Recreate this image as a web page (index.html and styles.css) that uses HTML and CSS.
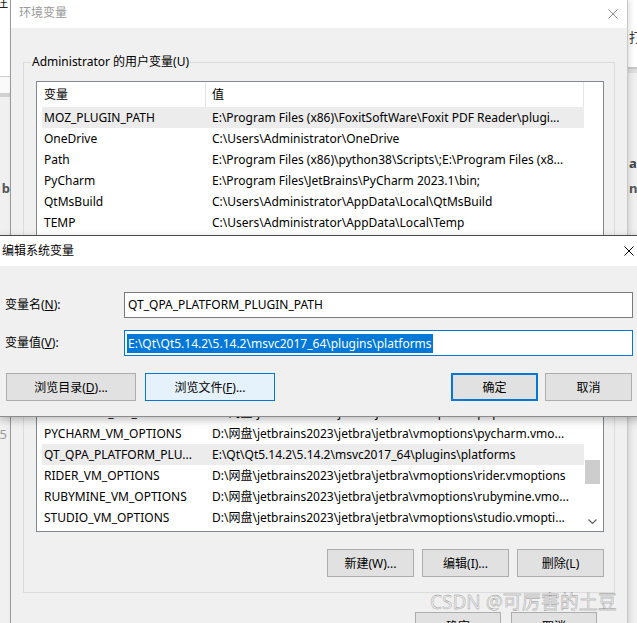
FILE: index.html
```html
<!DOCTYPE html>
<html lang="zh-CN">
<head>
<meta charset="utf-8">
<title>环境变量</title>
<link rel="stylesheet" href="styles.css">
</head>
<body>
<div class="screen">
  <div class="bgwin bg-left">
    <div class="frag f-top">备注</div>
    <div class="frag f-b"><span class="blue">l</span>&nbsp;b</div>
    <div class="frag f-5">5</div>
  </div>
  <div class="bgwin bg-right">
    <div class="frag r-top">打</div>
    <div class="frag r-at">at</div>
    <div class="frag r-nis">nis</div>
  </div>

  <div class="win env">
    <div class="titlebar">
      <span class="title">环境变量</span>
      <svg class="close" width="10" height="10" viewBox="0 0 10 10"><path d="M0.5 0.5L9.5 9.5M9.5 0.5L0.5 9.5" stroke="#8f8f8f" stroke-width="1" fill="none"/></svg>
    </div>
    <div class="env-body">
      <div class="group g-user">
        <span class="legend">Administrator 的用户变量(U)</span>
        <div class="list l-user">
          <div class="list-main">
            <div class="lhead"><span class="h1">变量</span><span class="h2">值</span></div>
            <div class="row sel"><span class="c1">MOZ_PLUGIN_PATH</span><span class="c2">E:\Program Files (x86)\FoxitSoftWare\Foxit PDF Reader\plugi...</span></div>
            <div class="row"><span class="c1">OneDrive</span><span class="c2">C:\Users\Administrator\OneDrive</span></div>
            <div class="row"><span class="c1">Path</span><span class="c2">E:\Program Files (x86)\python38\Scripts\;E:\Program Files (x8...</span></div>
            <div class="row"><span class="c1">PyCharm</span><span class="c2">E:\Program Files\JetBrains\PyCharm 2023.1\bin;</span></div>
            <div class="row"><span class="c1">QtMsBuild</span><span class="c2">C:\Users\Administrator\AppData\Local\QtMsBuild</span></div>
            <div class="row"><span class="c1">TEMP</span><span class="c2">C:\Users\Administrator\AppData\Local\Temp</span></div>
            <div class="row"><span class="c1">TMP</span><span class="c2">C:\Users\Administrator\AppData\Local\Temp</span></div>
          </div>
          <div class="vscroll"></div>
        </div>
      </div>

      <div class="group g-sys">
        <span class="legend">系统变量(S)</span>
        <div class="list l-sys">
          <div class="list-main">
            <div class="lhead"><span class="h1">变量</span><span class="h2">值</span></div>
            <div class="row"><span class="c1">OS</span><span class="c2">Windows_NT</span></div>
            <div class="row"><span class="c1">Path</span><span class="c2">C:\Windows\system32;C:\Windows;C:\Windows\System32\Wbem;...</span></div>
            <div class="row"><span class="c1">PATHEXT</span><span class="c2">.COM;.EXE;.BAT;.CMD;.VBS;.VBE;.JS;.JSE;.WSF;.WSH;.MSC</span></div>
            <div class="row"><span class="c1">PHPSTORM_VM_OPTIONS</span><span class="c2">D:\网盘\jetbrains2023\jetbra\jetbra\vmoptions\phpstorm.vmo...</span></div>
            <div class="row"><span class="c1">PYCHARM_VM_OPTIONS</span><span class="c2">D:\网盘\jetbrains2023\jetbra\jetbra\vmoptions\pycharm.vmo...</span></div>
            <div class="row sel"><span class="c1">QT_QPA_PLATFORM_PLU...</span><span class="c2">E:\Qt\Qt5.14.2\5.14.2\msvc2017_64\plugins\platforms</span></div>
            <div class="row"><span class="c1">RIDER_VM_OPTIONS</span><span class="c2">D:\网盘\jetbrains2023\jetbra\jetbra\vmoptions\rider.vmoptions</span></div>
            <div class="row"><span class="c1">RUBYMINE_VM_OPTIONS</span><span class="c2">D:\网盘\jetbrains2023\jetbra\jetbra\vmoptions\rubymine.vmo...</span></div>
            <div class="row"><span class="c1">STUDIO_VM_OPTIONS</span><span class="c2">D:\网盘\jetbrains2023\jetbra\jetbra\vmoptions\studio.vmopti...</span></div>
          </div>
          <div class="vscroll">
            <div class="thumb"></div>
            <svg class="arrow" width="9" height="6" viewBox="0 0 9 6"><path d="M0.5 0.5L4.5 4.5L8.5 0.5" stroke="#606060" stroke-width="1.2" fill="none"/></svg>
          </div>
        </div>
        <div class="btnrow grp-btns">
          <button class="btn">新建(W)...</button>
          <button class="btn">编辑(I)...</button>
          <button class="btn">删除(L)</button>
        </div>
      </div>

      <div class="btnrow dlg-btns">
        <button class="btn">确定</button>
        <button class="btn">取消</button>
      </div>
    </div>
  </div>

  <div class="win edit">
    <div class="titlebar">
      <span class="title">编辑系统变量</span>
      <svg class="close" width="10" height="10" viewBox="0 0 10 10"><path d="M0.5 0.5L9.5 9.5M9.5 0.5L0.5 9.5" stroke="#000" stroke-width="1" fill="none"/></svg>
    </div>
    <div class="edit-body">
      <label class="flabel">变量名(<u>N</u>):</label>
      <div class="field">QT_QPA_PLATFORM_PLUGIN_PATH</div>
      <label class="flabel">变量值(<u>V</u>):</label>
      <div class="field focus"><span class="selected">E:\Qt\Qt5.14.2\5.14.2\msvc2017_64\plugins\platforms</span></div>
      <div class="btnrow edit-btns">
        <button class="btn wide">浏览目录(<u>D</u>)...</button>
        <button class="btn wide hover">浏览文件(<u>F</u>)...</button>
        <button class="btn default push">确定</button>
        <button class="btn">取消</button>
      </div>
    </div>
  </div>

  <div class="watermark">CSDN @可厉害的土豆</div>
</div>
</body>
</html>
```
FILE: styles.css
```css
* { box-sizing: border-box; }
html, body { margin: 0; padding: 0; }
body {
  width: 637px;
  height: 623px;
  overflow: hidden;
  background: #f0f0f0;
  font-family: "Noto Sans", "Noto Sans CJK SC", sans-serif;
  font-size: 12px;
  color: #000;
}
.screen { position: relative; width: 637px; height: 623px; overflow: hidden; }

/* background windows */
.bgwin { position: absolute; top: 0; height: 623px; overflow: hidden; }
.bg-left {
  left: 0; width: 11px;
  background: linear-gradient(#fff 0 76px, #cfcfcf 76px 77px, #fafafa 77px 93px, #d0d0d0 93px 97px, #f0f0f0 97px);
}
.bg-right {
  left: 628px; width: 9px;
  background: linear-gradient(#fff 0 67px, #c8c8c8 67px 69px, #dedede 69px 73px, #f0f0f0 73px);
}
.frag { white-space: nowrap; line-height: 14px; }
.bg-left .frag { display: flex; justify-content: flex-end; }
.f-top { margin-top: -4px; margin-right: 3px; color: #222; font-size: 12px; }
.f-b { margin-top: 171px; margin-right: 1px; color: #555; font-weight: 700; font-size: 13px; }
.f-b .blue { color: #6aa3d8; font-weight: 400; }
.f-5 { margin-top: 232px; margin-right: 4px; color: #9a9a9a; font-size: 13px; }
.bg-right .frag { margin-left: 1px; }
.r-top { margin-top: 30px; font-size: 13px; color: #333; }
.r-at { margin-top: 112px; font-weight: 700; font-size: 13px; color: #444; }
.r-nis { margin-top: 11px; font-weight: 700; font-size: 13px; color: #555; }

/* outer environment variables dialog */
.env {
  position: absolute;
  left: 10px; top: 0;
  width: 618px; height: 640px;
  background: #f0f0f0;
  border-left: 1px solid #9a9a9a;
  border-right: 1px solid #c8c8c8;
  box-shadow: 2px 0 5px rgba(0,0,0,0.12);
}
.titlebar { display: flex; align-items: center; background: #fff; }
.env .titlebar { height: 28px; padding: 0 0 4px 8px; color: #999; }
.env .close { margin-left: auto; margin-right: 9px; margin-top: 3px; }
.env-body { padding: 34px 12px 0 12px; }

.group {
  position: relative;
  border: 1px solid #dcdcdc;
  padding: 18px 10px 0 12px;
}
.legend {
  position: absolute;
  left: 7px; top: -9px;
  padding: 0 1px;
  background: #f0f0f0;
  line-height: 16px;
}
.g-user { padding-bottom: 18px; }
.g-sys { margin-top: 9px; padding-bottom: 15px; }

.list {
  display: flex;
  border: 1px solid #828790;
  background: #fff;
  overflow: hidden;
}
.l-user { height: 185px; }
.l-sys { height: 219px; }
.list-main { flex: 1; min-width: 0; }
.vscroll { width: 19px; flex: none; position: relative; background: #fff; }
.thumb { position: absolute; left: 1px; top: 146px; width: 15px; height: 24px; background: #cdcdcd; }
.arrow { position: absolute; left: 4px; bottom: 6px; }

.lhead {
  display: flex;
  height: 25px;
  line-height: 25px;
  margin-left: 5px;
  border-right: 1px solid #e5e5e5;
}
.h1 { width: 164px; padding-left: 2px; border-right: 1px solid #e5e5e5; }
.h2 { padding-left: 6px; }

.row {
  display: flex;
  height: 21px;
  line-height: 21px;
  margin-left: 5px;
  white-space: nowrap;
}
.row.sel { background: #ececec; }
.c1 { width: 170px; flex: none; padding-left: 2px; overflow: hidden; }
.c2 { flex: 1; overflow: hidden; }

/* buttons */
.btn {
  font: inherit;
  color: #000;
  height: 28px;
  padding: 0;
  background: #e1e1e1;
  border: 1px solid #adadad;
  border-radius: 0;
  white-space: nowrap;
}
.btnrow { display: flex; }
.grp-btns { justify-content: flex-end; gap: 8px; margin-top: 17px; }
.grp-btns .btn { width: 87px; }
.dlg-btns { justify-content: flex-end; gap: 10px; margin-top: 19px; padding-right: 18px; }
.dlg-btns .btn { width: 86px; }

/* edit dialog */
.edit {
  position: absolute;
  left: 0; top: 235px;
  width: 660px;
  background: #f0f0f0;
  border-top: 1px solid #4a4a4a;
  border-bottom: 1px solid #8c8c8c;
  box-shadow: 0 3px 8px rgba(0,0,0,0.25);
}
.edit .titlebar { height: 30px; padding-left: 2px; padding-bottom: 2px; }
.edit .close { margin-left: auto; margin-right: 26px; margin-top: 2px; }
.edit-body {
  display: grid;
  grid-template-columns: 119px 509px;
  row-gap: 12px;
  align-items: center;
  padding: 26px 0 15px 5px;
}
.flabel { line-height: 16px; }
.field {
  height: 26px;
  line-height: 24px;
  background: #fff;
  border: 1px solid #7a7a7a;
  padding-left: 3px;
  white-space: nowrap;
  overflow: hidden;
}
.field.focus { border-color: #0078d7; padding-left: 2px; }
.selected {
  display: inline-block;
  background: #0078d7;
  color: #fff;
  line-height: 19px;
  padding: 0 1px;
  vertical-align: middle;
}
.edit-btns { grid-column: 1 / span 2; margin-top: 5px; padding-left: 1px; padding-right: 1px; }
.edit-btns .btn { width: 87px; }
.edit-btns .btn.wide { width: 130px; }
.edit-btns .btn.wide + .btn.wide { margin-left: 9px; }
.edit-btns .btn.push { margin-left: auto; margin-right: 7px; }
.btn.hover { background: #e5f1fb; border-color: #0078d7; }
.btn.default { border: 2px solid #0078d7; }

.watermark {
  position: absolute;
  left: 430px; top: 590px;
  font-size: 19px;
  line-height: 24px;
  color: #ececec;
  -webkit-text-stroke: 0.35px #8e8e8e;
  white-space: nowrap;
}
```
